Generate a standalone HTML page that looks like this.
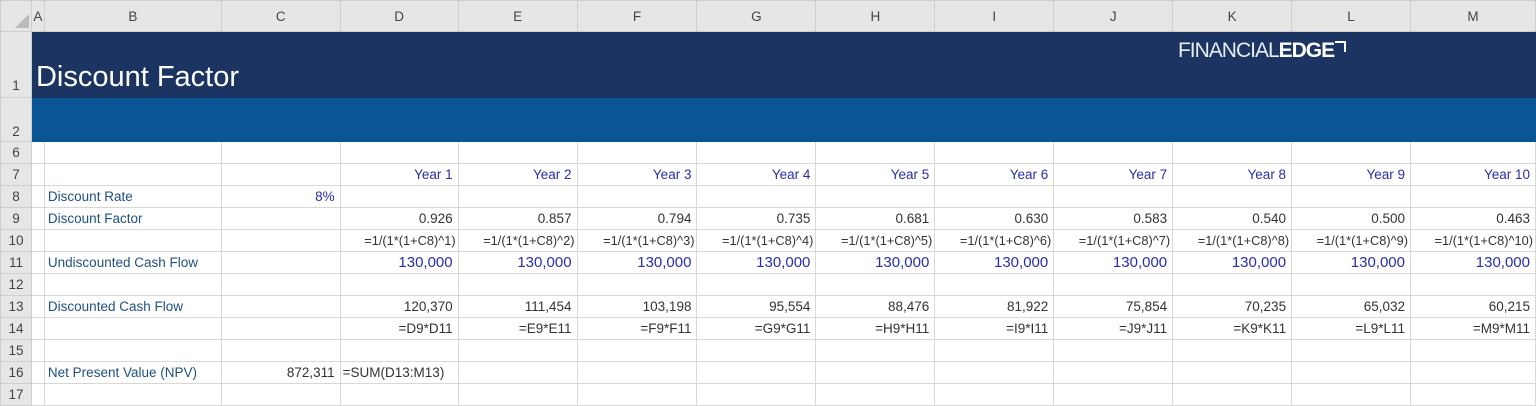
<!DOCTYPE html><html><head><style>
body{margin:0;width:1536px;height:405px;overflow:hidden;background:#fff;font-family:"Liberation Sans",sans-serif;}
table{border-collapse:collapse;table-layout:fixed;position:absolute;left:0;top:0}
td{border:1px solid #d8d8d8;padding:0 5px 0 3px;font-size:13.5px;color:#333;white-space:nowrap;overflow:visible;text-align:right;height:21px;}
tr.h td{background:#e6e6e6;color:#444;text-align:center;font-size:13.5px;border-color:#cfcfcf;height:30px;padding:0}
td.r{background:#e6e6e6;color:#444;text-align:center;padding:0;border-color:#cfcfcf}
td.l{text-align:left;color:#1f5082}
.y{color:#2a2ea8}
.b{color:#2a2ea8;font-size:15px}
.f{padding:0 2px;font-size:12.8px}
tr.t1 td.x{background:#1b3461;border-color:#1b3461}
tr.t2 td.x{background:#0b5594;border-color:#0b5594}
</style></head><body>
<table>
<colgroup><col style="width:31px"><col style="width:13px"><col style="width:177px"><col style="width:119px"><col style="width:118px"><col style="width:119px"><col style="width:120px"><col style="width:119px"><col style="width:119px"><col style="width:119px"><col style="width:119px"><col style="width:119px"><col style="width:119px"><col style="width:125px"></colgroup>
<tr class="h"><td style="position:relative"><div style="position:absolute;right:2px;bottom:3px;width:0;height:0;border-left:14px solid transparent;border-bottom:14px solid #bbb"></div></td><td>A</td><td>B</td><td>C</td><td>D</td><td>E</td><td>F</td><td>G</td><td>H</td><td>I</td><td>J</td><td>K</td><td>L</td><td>M</td></tr>
<tr class="t1" style="height:66px"><td class="r" style="vertical-align:bottom;padding-bottom:4px">1</td><td class="x" colspan="13" style="position:relative;text-align:left;padding:0"><div style="position:absolute;left:4px;top:29px;color:#fff;font-size:29px">Discount Factor</div><div style="position:absolute;left:1146px;top:7px;color:#fff;font-size:21px;letter-spacing:-1px"><span style="color:#e8ecf4">FINANCIAL</span><b>EDGE</b><span style="display:inline-block;width:9px;height:9px;border-top:2px solid #fff;border-right:2px solid #fff;vertical-align:top;margin-left:1px;margin-top:2px"></span></div></td></tr>
<tr class="t2" style="height:44px"><td class="r" style="vertical-align:bottom;padding-bottom:2px">2</td><td class="x" colspan="13"></td></tr>
<tr><td class="r">6</td><td></td><td></td><td></td><td></td><td></td><td></td><td></td><td></td><td></td><td></td><td></td><td></td><td></td></tr>
<tr><td class="r">7</td><td></td><td></td><td></td><td class="y">Year 1</td><td class="y">Year 2</td><td class="y">Year 3</td><td class="y">Year 4</td><td class="y">Year 5</td><td class="y">Year 6</td><td class="y">Year 7</td><td class="y">Year 8</td><td class="y">Year 9</td><td class="y">Year 10</td></tr>
<tr><td class="r">8</td><td></td><td class="l">Discount Rate</td><td class="y">8%</td><td></td><td></td><td></td><td></td><td></td><td></td><td></td><td></td><td></td><td></td></tr>
<tr><td class="r">9</td><td></td><td class="l">Discount Factor</td><td></td><td>0.926</td><td>0.857</td><td>0.794</td><td>0.735</td><td>0.681</td><td>0.630</td><td>0.583</td><td>0.540</td><td>0.500</td><td>0.463</td></tr>
<tr><td class="r">10</td><td></td><td></td><td></td><td class="f">=1/(1*(1+C8)^1)</td><td class="f">=1/(1*(1+C8)^2)</td><td class="f">=1/(1*(1+C8)^3)</td><td class="f">=1/(1*(1+C8)^4)</td><td class="f">=1/(1*(1+C8)^5)</td><td class="f">=1/(1*(1+C8)^6)</td><td class="f">=1/(1*(1+C8)^7)</td><td class="f">=1/(1*(1+C8)^8)</td><td class="f">=1/(1*(1+C8)^9)</td><td class="f">=1/(1*(1+C8)^10)</td></tr>
<tr><td class="r">11</td><td></td><td class="l">Undiscounted Cash Flow</td><td></td><td class="b">130,000</td><td class="b">130,000</td><td class="b">130,000</td><td class="b">130,000</td><td class="b">130,000</td><td class="b">130,000</td><td class="b">130,000</td><td class="b">130,000</td><td class="b">130,000</td><td class="b">130,000</td></tr>
<tr><td class="r">12</td><td></td><td></td><td></td><td></td><td></td><td></td><td></td><td></td><td></td><td></td><td></td><td></td><td></td></tr>
<tr><td class="r">13</td><td></td><td class="l">Discounted Cash Flow</td><td></td><td>120,370</td><td>111,454</td><td>103,198</td><td>95,554</td><td>88,476</td><td>81,922</td><td>75,854</td><td>70,235</td><td>65,032</td><td>60,215</td></tr>
<tr><td class="r">14</td><td></td><td></td><td></td><td>=D9*D11</td><td>=E9*E11</td><td>=F9*F11</td><td>=G9*G11</td><td>=H9*H11</td><td>=I9*I11</td><td>=J9*J11</td><td>=K9*K11</td><td>=L9*L11</td><td>=M9*M11</td></tr>
<tr><td class="r">15</td><td></td><td></td><td></td><td></td><td></td><td></td><td></td><td></td><td></td><td></td><td></td><td></td><td></td></tr>
<tr><td class="r">16</td><td></td><td class="l">Net Present Value (NPV)</td><td>872,311</td><td style="text-align:left;padding-left:2px">=SUM(D13:M13)</td><td></td><td></td><td></td><td></td><td></td><td></td><td></td><td></td><td></td></tr>
<tr><td class="r">17</td><td></td><td></td><td></td><td></td><td></td><td></td><td></td><td></td><td></td><td></td><td></td><td></td><td></td></tr>
</table>
</body></html>
